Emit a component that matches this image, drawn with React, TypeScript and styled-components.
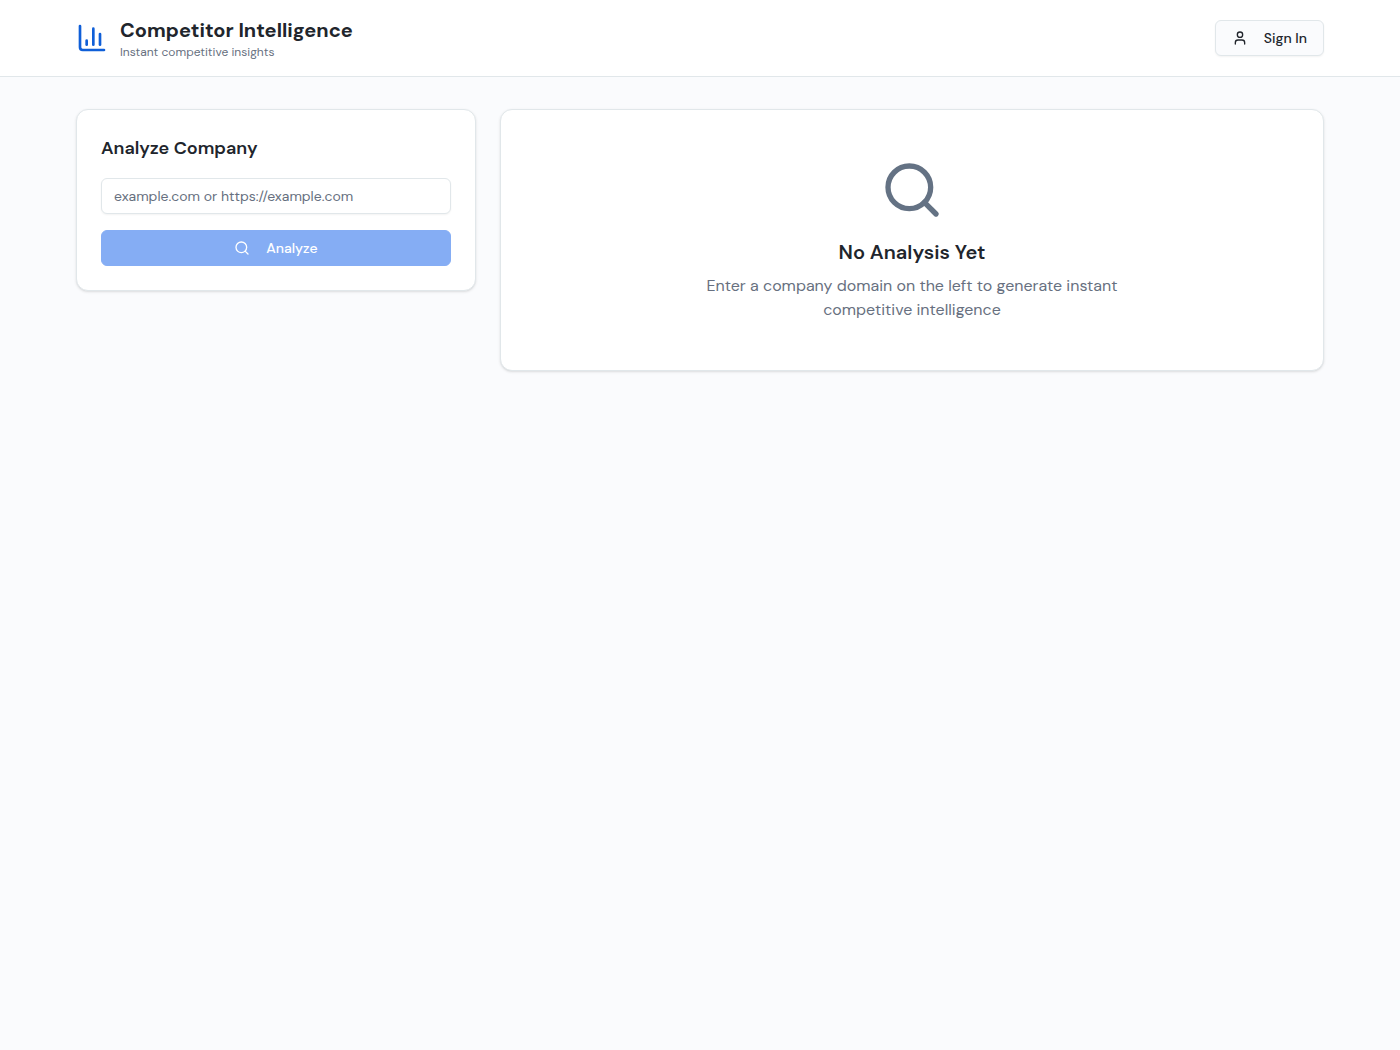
import React, { useState } from "react";
import styled, { createGlobalStyle } from "styled-components";
import { ChartColumn, Search, User } from "lucide-react";

const GlobalStyle = createGlobalStyle`
  *, *::before, *::after { box-sizing: border-box; }
  body {
    margin: 0;
    background: #fafbfd;
    color: #21252c;
    font-family: "DM Sans", Inter, "Noto Sans", sans-serif;
    font-size: 16px;
    line-height: 24px;
    -webkit-font-smoothing: antialiased;
  }
  h1, h2, h3, p { margin: 0; }
  button, input { font: inherit; }
`;

const Header = styled.header`
  background: #ffffff;
  border-bottom: 1px solid #e1e7ea;
`;

const Container = styled.div`
  width: 100%;
  max-width: 1280px;
  margin: 0 auto;
  padding: 0 16px;
`;

const HeaderRow = styled(Container)`
  display: flex;
  align-items: center;
  justify-content: space-between;
  padding: 16px;
`;

const Brand = styled.div`
  display: flex;
  align-items: center;
  gap: 12px;

  svg { color: #0f5fd8; }
`;

const BrandName = styled.h1`
  font-size: 20px;
  line-height: 28px;
  font-weight: 700;
`;

const Tagline = styled.p`
  color: #677080;
  font-size: 12px;
  line-height: 16px;
`;

const Button = styled.button<{ $primary?: boolean }>`
  display: flex;
  align-items: center;
  justify-content: center;
  gap: 16px;
  height: 36px;
  padding: 0 16px;
  border: 1px solid ${(p) => (p.$primary ? "#85adf4" : "#e1e7ea")};
  border-radius: 6px;
  background: ${(p) => (p.$primary ? "#85adf4" : "#fafbfd")};
  color: ${(p) => (p.$primary ? "#ffffff" : "#21252c")};
  box-shadow: ${(p) => (p.$primary ? "none" : "0 1px 2px rgba(0, 0, 0, 0.05)")};
  font-size: 14px;
  line-height: 20px;
  font-weight: 500;
  cursor: pointer;

  &:disabled { cursor: default; }
`;

const Main = styled.main`
  padding: 32px 0;
`;

const Columns = styled(Container)`
  display: grid;
  grid-template-columns: repeat(3, minmax(0, 1fr));
  gap: 24px;
  align-items: start;

  @media (max-width: 1023px) { grid-template-columns: minmax(0, 1fr); }
`;

const Card = styled.section`
  border: 1px solid #e1e7ea;
  border-radius: 12px;
  background: #ffffff;
  box-shadow: 0 1px 3px rgba(0, 0, 0, 0.1), 0 1px 2px -1px rgba(0, 0, 0, 0.1);
`;

const FormCard = styled(Card)`
  padding: 24px;
`;

const CardTitle = styled.h2`
  font-size: 18px;
  line-height: 28px;
  font-weight: 600;
`;

const Form = styled.form`
  display: flex;
  flex-direction: column;
  gap: 16px;
  margin-top: 16px;
`;

const Input = styled.input`
  width: 100%;
  height: 36px;
  padding: 0 12px;
  border: 1px solid #e1e7ea;
  border-radius: 6px;
  background: #ffffff;
  color: #21252c;
  box-shadow: 0 1px 2px rgba(0, 0, 0, 0.05);
  font-size: 14px;
  line-height: 20px;

  &::placeholder { color: #677080; opacity: 1; }
`;

const EmptyCard = styled(Card)`
  grid-column: span 2;
  display: flex;
  flex-direction: column;
  align-items: center;
  padding: 48px;
  text-align: center;

  svg { color: #647284; }

  @media (max-width: 1023px) { grid-column: auto; }
`;

const EmptyTitle = styled.h3`
  margin-top: 16px;
  font-size: 20px;
  line-height: 28px;
  font-weight: 600;
`;

const EmptyText = styled.p`
  max-width: 448px;
  margin-top: 8px;
  color: #677080;
`;

export default function App() {
  const [domain, setDomain] = useState("");

  return (
    <>
      <GlobalStyle />
      <Header>
        <HeaderRow>
          <Brand>
            <ChartColumn size={32} aria-hidden />
            <div>
              <BrandName>Competitor Intelligence</BrandName>
              <Tagline>Instant competitive insights</Tagline>
            </div>
          </Brand>
          <Button type="button">
            <User size={16} aria-hidden />
            Sign In
          </Button>
        </HeaderRow>
      </Header>
      <Main>
        <Columns>
          <FormCard>
            <CardTitle id="analyze-title">Analyze Company</CardTitle>
            <Form onSubmit={(e) => e.preventDefault()}>
              <Input
                type="text"
                aria-labelledby="analyze-title"
                placeholder="example.com or https://example.com"
                value={domain}
                onChange={(e) => setDomain(e.target.value)}
              />
              <Button type="submit" $primary disabled={domain.trim() === ""}>
                <Search size={16} aria-hidden />
                Analyze
              </Button>
            </Form>
          </FormCard>
          <EmptyCard>
            <Search size={64} aria-hidden />
            <EmptyTitle>No Analysis Yet</EmptyTitle>
            <EmptyText>
              Enter a company domain on the left to generate instant competitive intelligence
            </EmptyText>
          </EmptyCard>
        </Columns>
      </Main>
    </>
  );
}
